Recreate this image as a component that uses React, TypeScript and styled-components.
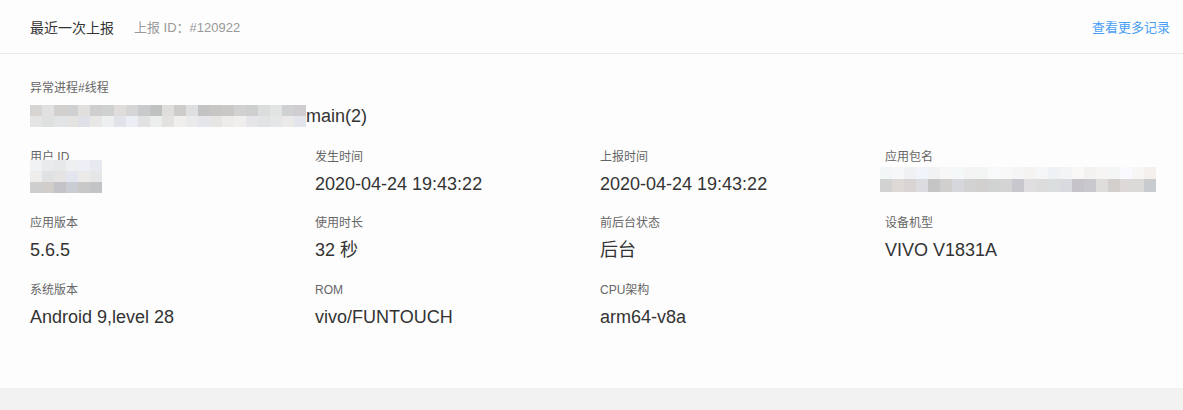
import styled, { createGlobalStyle } from 'styled-components';

const GlobalStyle = createGlobalStyle`
  body {
    margin: 0;
    background: #f2f2f2;
    font-family: "Liberation Sans", Arial, "Noto Sans CJK SC", sans-serif;
  }
`;

const Page = styled.div`
  width: 1183px;
  min-height: 410px;
  background: #f2f2f2;
`;

const Card = styled.div`
  background: #fdfdfd;
`;

const Header = styled.div`
  height: 53px;
  display: flex;
  align-items: center;
  padding: 0 13px 0 30px;
  border-bottom: 1px solid #e9e9e9;
`;

const Title = styled.span`
  font-size: 14px;
  color: #333;
`;

const ReportId = styled.span`
  font-size: 13px;
  color: #999;
  margin-left: 20px;
`;

const MoreLink = styled.a`
  margin-left: auto;
  font-size: 13px;
  color: #4a9ff5;
  text-decoration: none;
  cursor: pointer;
`;

const Body = styled.div`
  padding: 25px 13px 61px 30px;
  display: grid;
  grid-template-columns: repeat(4, 285px);
  row-gap: 20.5px;
`;

const Field = styled.div<{ $wide?: boolean }>`
  grid-column: ${(p) => (p.$wide ? '1 / -1' : 'auto')};
`;

const Label = styled.div`
  font-size: 12px;
  line-height: 18px;
  color: #666;
  margin-bottom: 8px;
`;

const Value = styled.div`
  font-size: 18px;
  line-height: 20px;
  color: #333;
  display: flex;
  align-items: center;
`;

const MosaicGrid = styled.div<{ $cols: number; $cell: number; $h: number; $dx: number; $dy: number }>`
  display: grid;
  grid-template-columns: repeat(${(p) => p.$cols}, ${(p) => p.$cell}px);
  grid-auto-rows: ${(p) => p.$h}px;
  margin: ${(p) => p.$dy}px 0 0 ${(p) => p.$dx}px;
  flex: none;
`;

const Cell = styled.div<{ $bg: string }>`
  background: ${(p) => p.$bg};
`;

// deterministic pseudo random greys so the mosaic looks like a blurred screenshot
const rand = (seed: number) => {
  const x = Math.sin(seed * 12.9898) * 43758.5453;
  return x - Math.floor(x);
};

const grey = (seed: number, base: number, spread: number) => {
  const l = base + (rand(seed) - 0.5) * spread;
  const tint = (rand(seed + 7) - 0.5) * 12;
  const r = Math.round(l + tint * 0.5);
  const g = Math.round(l);
  const b = Math.round(l - tint * 0.3 + (rand(seed + 3) > 0.8 ? 6 : 0));
  return `rgb(${r},${g},${b})`;
};

type MosaicProps = {
  cols: number;
  cell: number;
  rowHeight: number;
  rows: { base: number; spread: number }[];
  seed: number;
  dx?: number;
  dy?: number;
};

const Mosaic = ({ cols, cell, rowHeight, rows, seed, dx = 0, dy = 0 }: MosaicProps) => (
  <MosaicGrid $cols={cols} $cell={cell} $h={rowHeight} $dx={dx} $dy={dy}>
    {rows.flatMap((row, r) =>
      Array.from({ length: cols }, (_, c) => (
        <Cell key={`${r}-${c}`} $bg={grey(seed + r * 97 + c * 13, row.base, row.spread)} />
      ))
    )}
  </MosaicGrid>
);

const fields = [
  { label: '发生时间', value: '2020-04-24 19:43:22' },
  { label: '上报时间', value: '2020-04-24 19:43:22' },
  { label: '应用包名', value: null },
  { label: '应用版本', value: '5.6.5' },
  { label: '使用时长', value: '32 秒' },
  { label: '前后台状态', value: '后台' },
  { label: '设备机型', value: 'VIVO V1831A' },
  { label: '系统版本', value: 'Android 9,level 28' },
  { label: 'ROM', value: 'vivo/FUNTOUCH' },
  { label: 'CPU架构', value: 'arm64-v8a' },
];

const App = () => (
  <Page>
    <GlobalStyle />
    <Card>
      <Header>
        <Title>最近一次上报</Title>
        <ReportId>上报 ID：#120922</ReportId>
        <MoreLink>查看更多记录</MoreLink>
      </Header>
      <Body>
        <Field $wide>
          <Label>异常进程#线程</Label>
          <Value>
            <Mosaic
              cols={23}
              cell={12}
              rowHeight={11}
              seed={3}
              rows={[
                { base: 210, spread: 36 },
                { base: 232, spread: 16 },
              ]}
            />
            main(2)
          </Value>
        </Field>
        <Field>
          <Label>用户 ID</Label>
          <Value>
            <Mosaic
              cols={6}
              cell={12}
              rowHeight={11}
              seed={41}
              dy={-14}
              rows={[
                { base: 236, spread: 14 },
                { base: 232, spread: 14 },
                { base: 204, spread: 22 },
              ]}
            />
          </Value>
        </Field>
        {fields.map((f) => (
          <Field key={f.label}>
            <Label>{f.label}</Label>
            <Value>
              {f.value ?? (
                <Mosaic
                  cols={23}
                  cell={12}
                  rowHeight={12.5}
                  seed={77}
                  dx={-5}
                  dy={-7}
                  rows={[
                    { base: 244, spread: 10 },
                    { base: 210, spread: 30 },
                  ]}
                />
              )}
            </Value>
          </Field>
        ))}
      </Body>
    </Card>
  </Page>
);

export default App;
